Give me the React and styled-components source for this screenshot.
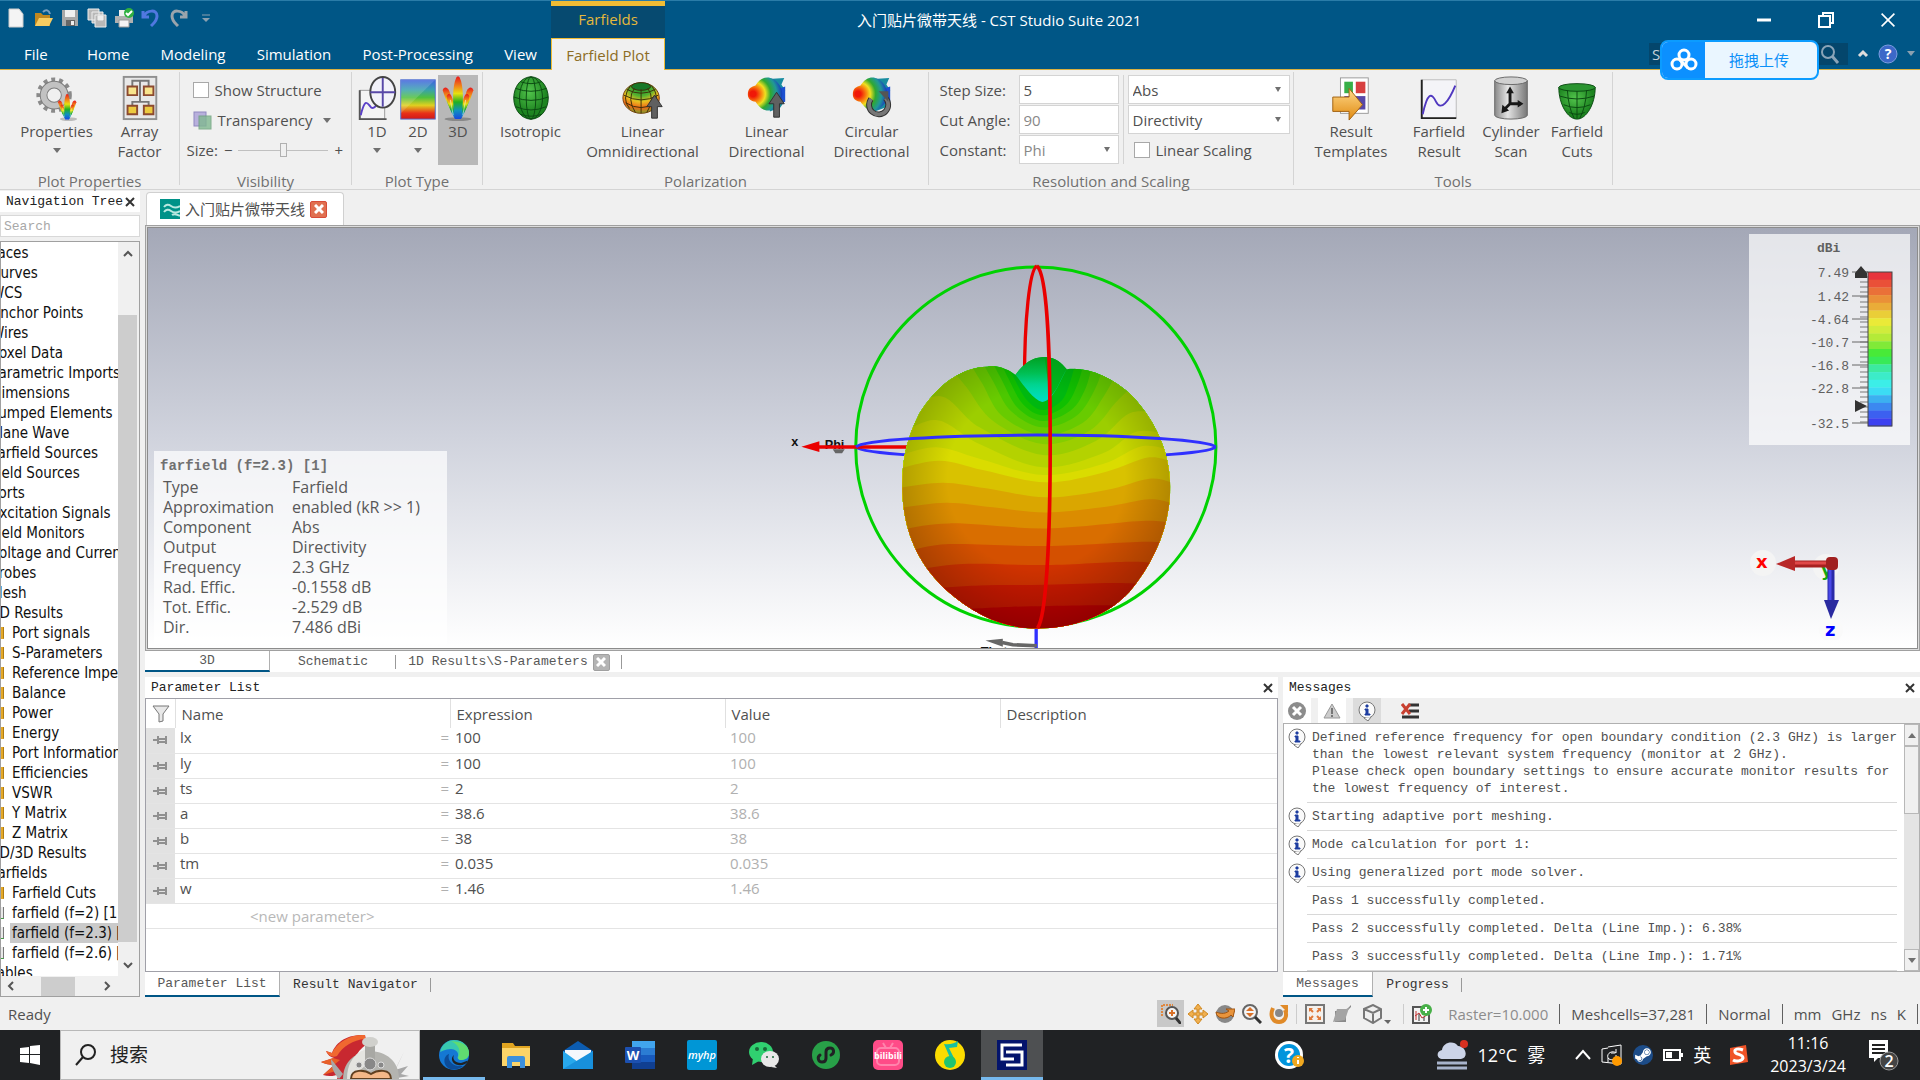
import React from "react";
import styled, { createGlobalStyle, css } from "styled-components";
import { FaSteamSymbol } from "react-icons/fa";

const ui = `"Open Sans", "Noto Sans CJK SC", sans-serif`;
const mono = `"Liberation Mono", "Noto Sans CJK SC", monospace`;
const tree = `"DejaVu Sans Condensed", "DejaVu Sans", sans-serif`;

const quickAccess = ["New", "Open", "Save", "Save All", "Print", "Undo", "Redo"];
const menu = ["File", "Home", "Modeling", "Simulation", "Post-Processing", "View"];

const treeItems = [
  ["Faces"],
  ["Curves"],
  ["WCS"],
  ["Anchor Points"],
  ["Wires"],
  ["Voxel Data"],
  ["Parametric Imports"],
  ["Dimensions"],
  ["Lumped Elements"],
  ["Plane Wave"],
  ["Farfield Sources"],
  ["Field Sources"],
  ["Ports"],
  ["Excitation Signals"],
  ["Field Monitors"],
  ["Voltage and Current Monitors"],
  ["Probes"],
  ["Mesh"],
  ["1D Results"],
  ["Port signals", "folder"],
  ["S-Parameters", "folder"],
  ["Reference Impedance", "folder"],
  ["Balance", "folder"],
  ["Power", "folder"],
  ["Energy", "folder"],
  ["Port Information", "folder"],
  ["Efficiencies", "folder"],
  ["VSWR", "folder"],
  ["Y Matrix", "folder"],
  ["Z Matrix", "folder"],
  ["2D/3D Results"],
  ["Farfields"],
  ["Farfield Cuts", "folder"],
  ["farfield (f=2) [1]", "field"],
  ["farfield (f=2.3) [1]", "field"],
  ["farfield (f=2.6) [1]", "field"],
  ["Tables"],
];

const info = [
  ["Type", "Farfield"],
  ["Approximation", "enabled (kR >> 1)"],
  ["Component", "Abs"],
  ["Output", "Directivity"],
  ["Frequency", "2.3 GHz"],
  ["Rad. Effic.", "-0.1558 dB"],
  ["Tot. Effic.", "-2.529 dB"],
  ["Dir.", "7.486 dBi"],
];

const params = [
  ["lx", "100"],
  ["ly", "100"],
  ["ts", "2"],
  ["a", "38.6"],
  ["b", "38"],
  ["tm", "0.035"],
  ["w", "1.46"],
];

const messages = [
  [
    true,
    "Defined reference frequency for open boundary condition (2.3 GHz) is larger\nthan the lowest relevant system frequency (monitor at 2 GHz).\nPlease check open boundary settings to ensure accurate monitor results for\nthe lowest frequency of interest.",
  ],
  [true, "Starting adaptive port meshing."],
  [true, "Mode calculation for port 1:"],
  [true, "Using generalized port mode solver."],
  [false, "Pass 1 successfully completed."],
  [false, "Pass 2 successfully completed. Delta (Line Imp.): 6.38%"],
  [false, "Pass 3 successfully completed. Delta (Line Imp.): 1.71%"],
];

// smooth curve through a list of points
const curve = (p) => {
  let d = `M${p[0]}`;
  for (let i = 0; i < p.length - 1; i++) {
    const a = p[i - 1] || p[i];
    const b = p[i];
    const c = p[i + 1];
    const e = p[i + 2] || c;
    d += `C${b[0] + (c[0] - a[0]) / 6},${b[1] + (c[1] - a[1]) / 6} ${c[0] - (e[0] - b[0]) / 6},${c[1] - (e[1] - b[1]) / 6} ${c}`;
  }
  return d;
};

const body =
  "M708,404C670,378 640,378 625,380C540,382 470,440 420,520C385,590 368,650 368,740C370,860 405,960 500,1050C590,1130 680,1165 770,1165C880,1165 980,1130 1050,1055C1130,960 1172,850 1172,740C1172,640 1130,545 1060,470C1000,410 920,380 862,388C845,368 830,352 795,351C760,351 735,368 708,404Z";

// each level is filled from its contour down to the bottom
const levels = [
  ["#10c000", [[680, 360], [704, 415], [742, 480], [790, 510], [846, 482], [872, 425], [890, 360]]],
  ["#2cc400", [[660, 360], [688, 418], [730, 492], [790, 526], [860, 494], [895, 430], [915, 360]]],
  ["#4cc800", [[635, 360], [668, 422], [715, 504], [790, 543], [875, 510], [920, 440], [940, 360]]],
  ["#68cb00", [[605, 360], [642, 426], [695, 514], [790, 562], [890, 528], [945, 450], [975, 370]]],
  ["#84cd00", [[565, 360], [608, 430], [668, 528], [790, 585], [910, 548], [975, 465], [1015, 390]]],
  ["#9cce00", [[490, 360], [560, 440], [640, 542], [790, 612], [930, 572], [1010, 486], [1070, 430]]],
  ["#b4d200", [[380, 500], [490, 470], [600, 562], [790, 645], [950, 602], [1050, 520], [1140, 520]]],
  ["#c8d800", [[350, 590], [470, 540], [600, 612], [790, 682], [970, 640], [1075, 574], [1190, 590]]],
  ["#dadc00", [[350, 650], [470, 622], [600, 656], [790, 705], [970, 672], [1090, 618], [1190, 636]]],
  ["#d9c200", [[350, 688], [480, 662], [610, 690], [800, 727], [980, 695], [1110, 652], [1190, 672]]],
  ["#daa600", [[350, 745], [490, 728], [620, 745], [800, 772], [980, 750], [1110, 716], [1190, 732]]],
  ["#db8c00", [[350, 805], [500, 788], [640, 802], [800, 817], [980, 800], [1110, 778], [1190, 793]]],
  ["#d96e00", [[350, 872], [510, 850], [800, 865], [1100, 842], [1190, 856]]],
  ["#d45000", [[380, 935], [510, 912], [800, 918], [1100, 905], [1190, 916]]],
  ["#cf3200", [[400, 992], [550, 972], [800, 975], [1050, 965], [1150, 972]]],
  ["#c81800", [[440, 1046], [600, 1036], [800, 1034], [1000, 1029], [1100, 1032]]],
  ["#bf0000", [[540, 1108], [700, 1100], [900, 1096], [1020, 1096]]],
];

const Svg = ({ s = 20, w, h, box, children }) => (
  <svg width={w || s} height={h || s} viewBox={box || `0 0 ${w || s} ${h || s}`} fill="none" aria-hidden="true">
    {children}
  </svg>
);

const Defs = () => (
  <DefsSvg width="0" height="0" aria-hidden="true">
    <defs>
      <linearGradient id="rainbow" x2="0" y2="1">
        <stop offset="0" stopColor="#e8181c" />
        <stop offset="0.25" stopColor="#f09018" />
        <stop offset="0.4" stopColor="#e8e010" />
        <stop offset="0.6" stopColor="#20b020" />
        <stop offset="0.8" stopColor="#1090c0" />
        <stop offset="1" stopColor="#1848e0" />
      </linearGradient>
      <linearGradient id="rainbowDown" x2="0" y2="1">
        <stop offset="0" stopColor="#4060e0" />
        <stop offset="0.25" stopColor="#38a0b0" />
        <stop offset="0.45" stopColor="#50c040" />
        <stop offset="0.65" stopColor="#e0d020" />
        <stop offset="0.85" stopColor="#e83018" />
        <stop offset="1" stopColor="#d01818" />
      </linearGradient>
      <linearGradient id="metal" x2="1">
        <stop offset="0" stopColor="#888" />
        <stop offset="0.4" stopColor="#e4e4e4" />
        <stop offset="1" stopColor="#777" />
      </linearGradient>
      <linearGradient id="gold" x2="0" y2="1">
        <stop offset="0" stopColor="#ffd98a" />
        <stop offset="1" stopColor="#e08a10" />
      </linearGradient>
      <radialGradient id="green" cx="0.45" cy="0.35">
        <stop offset="0" stopColor="#52c44c" />
        <stop offset="1" stopColor="#1d8420" />
      </radialGradient>
      <radialGradient id="torus" cx="0.5" cy="0.1" r="0.95">
        <stop offset="0" stopColor="#108028" />
        <stop offset="0.35" stopColor="#50b030" />
        <stop offset="0.55" stopColor="#e8c020" />
        <stop offset="0.75" stopColor="#f06818" />
        <stop offset="1" stopColor="#60b030" />
      </radialGradient>
      <radialGradient id="beam" cx="0.15" cy="0.5" r="0.85">
        <stop offset="0.1" stopColor="#f01808" />
        <stop offset="0.3" stopColor="#f89010" />
        <stop offset="0.42" stopColor="#f0e020" />
        <stop offset="0.6" stopColor="#30a830" />
        <stop offset="0.8" stopColor="#209898" />
        <stop offset="1" stopColor="#1838c0" />
      </radialGradient>
    </defs>
  </DefsSvg>
);

const lobes = (
  <g fill="url(#rainbow)">
    <path d="M13 44C8 34 3 24 0 14C1 10 5 10 7 15L14 38Z" />
    <path d="M19 44C24 34 29 24 32 14C31 10 27 10 25 15L18 38Z" />
    <path d="M13 44C8 36 5 28 4 20C6 16 9 18 10 22L16 40Z" />
    <path d="M19 44C24 36 27 28 28 20C26 16 23 18 22 22L16 40Z" />
    <path d="M13 44C10 28 10 10 14 1C15 -1 17 -1 18 1C22 10 22 28 19 44Z" />
    <path d="M11 40L8 24M21 40L24 24" stroke="#fff8" />
  </g>
);

const globeLines = (
  <g stroke="#0a4a12" strokeWidth="1">
    <ellipse cx="20" cy="20" rx="19" ry="19" />
    <ellipse cx="20" cy="20" rx="13" ry="19" />
    <ellipse cx="20" cy="20" rx="5" ry="19" />
    <path d="M3 12Q20 17 37 12M1 20Q20 26 39 20M3 28Q20 34 37 28M8 6Q20 10 32 6M8 35Q20 39 32 35" />
  </g>
);

const upArrow = <path d="M33 21L41 33H36V45H30V33H25Z" fill="#606060" stroke="#303030" />;

const beam = (
  <g>
    <path d="M27 4L39 3L36 10L40 16L37 22L40 26L35 34L24 38Z" fill="#188ca0" />
    <path d="M34 14L40 12V28L33 30Z" fill="#1c50d0" />
    <path d="M1 20C1 14 5 12 9 11C14 2 22 1 27 4C34 8 37 15 37 20C37 27 32 35 24 37C16 38 12 32 9 28C4 27 1 25 1 20Z" fill="url(#beam)" />
  </g>
);

const bigIcons = {
  properties: (
    <Svg w={44} h={48}>
      <circle cx="19" cy="21" r="16" stroke="#8a8a8a" strokeWidth="5" strokeDasharray="4 4" />
      <circle cx="19" cy="21" r="11" stroke="#7c7c7c" strokeWidth="8" />
      <circle cx="19" cy="21" r="11" stroke="#c2c2c2" strokeWidth="6" />
      <ellipse cx="34" cy="46" rx="9" ry="2" fill="#bbb" />
      <g transform="translate(23 20) scale(0.6)">{lobes}</g>
    </Svg>
  ),
  array: (
    <Svg w={36} h={48}>
      <rect x="1" y="2" width="34" height="44" fill="#e8e8e8" stroke="#909090" strokeWidth="2" />
      <path d="M10 14V6H27V14M18 6V28M10 36V28H27V36" stroke="#777" strokeWidth="2" />
      <g stroke="#8c4a30" strokeWidth="2">
        <path d="M5 12H15V21H5ZM22 12H32V21H22Z" fill="#f8e48c" />
        <path d="M5 32H15V41H5ZM22 32H32V41H22Z" fill="#ecca40" />
      </g>
    </Svg>
  ),
  d1: (
    <Svg w={40} h={48}>
      <path d="M2 16H28V46H2Z" fill="#f4f4f4" stroke="#999" />
      <path d="M2 16V46H30" stroke="#555" strokeWidth="2" />
      <path d="M3 42C8 22 10 30 14 34C18 36 20 30 24 24" stroke="#5a40c8" strokeWidth="2" />
      <ellipse cx="26" cy="18" rx="13" ry="16" fill="#f2f2fa" stroke="#444" strokeWidth="2" />
      <path d="M13 18H39M26 3V33" stroke="#5848a8" strokeWidth="2" />
    </Svg>
  ),
  d2: (
    <Svg w={38} h={48}>
      <rect x="1" y="5" width="36" height="41" fill="url(#rainbowDown)" stroke="#5070d0" />
      <path d="M1 5H37L1 40Z" fill="#fff" opacity="0.15" />
    </Svg>
  ),
  d3: (
    <Svg w={34} h={48} box="0 -2 32 48">
      <ellipse cx="16" cy="44" rx="14" ry="2" fill="#888" />
      {lobes}
    </Svg>
  ),
  isotropic: (
    <Svg w={38} h={48}>
      <ellipse cx="19" cy="24" rx="18" ry="22" fill="url(#green)" stroke="#0a4a12" />
      <g stroke="#0a4a12">
        <ellipse cx="19" cy="24" rx="12" ry="22" />
        <ellipse cx="19" cy="24" rx="5" ry="22" />
        <path d="M3 14Q19 20 35 14M1 23Q19 30 37 23M3 33Q19 40 35 33M8 7Q19 11 30 7M8 41Q19 45 30 41" />
      </g>
    </Svg>
  ),
  omni: (
    <Svg w={42} h={48}>
      <ellipse cx="19" cy="24" rx="19" ry="16" fill="url(#torus)" stroke="#7a4010" />
      <g stroke="#3c3008" strokeWidth="1">
        <ellipse cx="19" cy="12" rx="10" ry="4" fill="#187828" />
        <path d="M1 21Q19 31 37 21M3 29Q19 39 35 29M4 15Q19 23 34 15M12 14Q4 25 13 39M26 14Q34 25 25 39M19 15V40M8 11Q-2 25 7 35M30 11Q40 25 31 35" />
      </g>
      {upArrow}
    </Svg>
  ),
  linear: (
    <Svg w={42} h={48}>
      {beam}
      <path d="M31 18L39 30H34V44H28V30H23Z" fill="#606060" stroke="#303030" />
    </Svg>
  ),
  circular: (
    <Svg w={42} h={48}>
      {beam}
      <path d="M20 25A10 10 0 1 0 35 24" stroke="#303030" strokeWidth="6" />
      <path d="M20 25A10 10 0 1 0 35 24" stroke="#777" strokeWidth="4" />
      <path d="M28 17H38V28Z" fill="#555" />
    </Svg>
  ),
  templates: (
    <Svg w={40} h={48}>
      <rect x="9" y="3" width="29" height="37" fill="#fff" stroke="#999" />
      <path d="M13 7H22V19H13Z" fill="#38b048" />
      <path d="M25 7H35V19H25Z" fill="#d84040" />
      <path d="M13 22H35V36H13Z" fill="#5848a8" />
      <path d="M1 23H18V14L32 31L18 47V38H1Z" fill="url(#gold)" stroke="#a06010" />
    </Svg>
  ),
  result: (
    <Svg w={40} h={48}>
      <path d="M2 5H38V45H2Z" fill="#f4f4f8" stroke="#bbb" />
      <path d="M2 5V45H38" stroke="#222" strokeWidth="2" />
      <path d="M3 41C8 18 12 18 17 28C22 38 30 28 37 11" stroke="#5038c0" strokeWidth="2" />
    </Svg>
  ),
  cylinder: (
    <Svg w={38} h={48}>
      <path d="M2 6V42A17 4 0 0 0 36 42V6Z" fill="url(#metal)" stroke="#666" />
      <ellipse cx="19" cy="6" rx="17" ry="4" fill="#d0d0d0" stroke="#666" />
      <path d="M18 16V30L11 37M18 30H29" stroke="#181818" strokeWidth="3" />
      <path d="M18 12L22 19H14ZM9 40L10 31L17 37ZM32 30L26 26V34Z" fill="#181818" />
    </Svg>
  ),
  cuts: (
    <Svg w={40} h={48}>
      <path d="M1 13C1 30 10 46 20 46S39 30 39 13Z" fill="url(#green)" stroke="#0a4a12" />
      <ellipse cx="20" cy="13" rx="19" ry="4" fill="#2a9430" stroke="#0a4a12" />
      <path d="M2 22Q20 28 38 22M6 31Q20 37 34 31M12 39Q20 43 28 39M10 16Q11 34 17 45M20 17V45M30 16Q29 34 23 45" stroke="#0a4a12" />
    </Svg>
  ),
};

const quickIcons = {
  New: <path d="M3 1H13L17 6V19H3Z" fill="#f4f4f4" stroke="#ccc" />,
  Open: (
    <>
      <path d="M2 5H8L10 7H17V18H2Z" fill="#c08820" />
      <path d="M2 18L6 10H20L16 18Z" fill="#f8cc60" />
      <path d="M10 4C13 1 16 2 17 6" stroke="#7aa0c0" strokeWidth="2" />
    </>
  ),
  Save: (
    <>
      <path d="M2 2H18V18H2Z" fill="#a8a8a8" />
      <path d="M5 2H15V9H5Z" fill="#f0f0f0" />
      <path d="M6 12H15V18H6Z" fill="#666" />
      <path d="M11 13H14V17H11Z" fill="#eee" />
    </>
  ),
  "Save All": (
    <g fill="#b8b8b8" stroke="#eee">
      <path d="M1 1H12V12H1ZM5 4H16V15H5Z" />
      <path d="M8 7H19V19H8Z" />
      <path d="M11 8H16V12H11Z" fill="#eee" />
    </g>
  ),
  Print: (
    <>
      <path d="M5 2H15V8H5Z" fill="#eee" />
      <path d="M1 8H19V15H1Z" fill="#b0b0b0" />
      <path d="M5 12H15V19H5Z" fill="#f4f4f4" stroke="#999" />
      <circle cx="15" cy="5" r="5" fill="#30b040" />
      <path d="M12 5L14 7L18 3" stroke="#fff" strokeWidth="2" />
    </>
  ),
  Undo: <path d="M2 3V9H8M3 8C6 2 16 1 16 8C16 13 13 15 10 18" stroke="#5078e0" strokeWidth="3" />,
  Redo: <path d="M18 3V9H12M17 8C14 2 4 1 4 8C4 13 7 15 10 18" stroke="#9aa4ac" strokeWidth="3" />,
};

const statusIcons = [
  <>
    <path d="M1 12V1H12" stroke="#e08840" strokeWidth="2" strokeDasharray="2 1" />
    <circle cx="11" cy="9" r="6" fill="#f4f4f4" stroke="#555" strokeWidth="2" />
    <path d="M15 14L20 20" stroke="#333" strokeWidth="3" />
    <path d="M8 9H14M11 6V12" stroke="#d87028" strokeWidth="2" />
  </>,
  <path d="M10 0L14 5H11V9H15V6L20 10L15 14V11H11V15H14L10 20L6 15H9V11H5V14L0 10L5 6V9H9V5H6Z" fill="#f0b050" stroke="#d08820" />,
  <>
    <circle cx="10" cy="10" r="9" fill="#888" />
    <path d="M1 8C1 15 12 16 16 11L18 13L20 5H11L14 7C9 11 4 9 1 8Z" fill="#e8943c" stroke="#a05410" />
  </>,
  <>
    <circle cx="8" cy="8" r="7" fill="#f4f4f4" stroke="#666" strokeWidth="2" />
    <path d="M13 13L19 19" stroke="#333" strokeWidth="3" />
    <path d="M8 3L12 7H4ZM8 13L12 9H4Z" fill="#d87028" />
  </>,
  <>
    <circle cx="10" cy="9" r="4" fill="#888" />
    <path d="M4 4C0 13 5 18 10 18S19 13 16 6" stroke="#e08a28" strokeWidth="4" />
    <path d="M11 1H19V9Z" fill="#e08a28" />
  </>,
  null,
  <>
    <rect x="1" y="1" width="18" height="18" fill="#f4f0ec" stroke="#777" strokeWidth="2" />
    <g stroke="#e07838" strokeWidth="2">
      <path d="M5 5L8 8M15 5L12 8M15 15L12 12M5 15L8 12" />
    </g>
    <path d="M4 4H8L4 8ZM16 4V8L12 4ZM16 16H12L16 12ZM4 16V12L8 16Z" fill="#e07838" />
  </>,
  <>
    <path d="M3 7H13L19 1V3L14 8V18H3Z" fill="#8a8a8a" />
    <path d="M1 18L5 5H14L17 4L13 16Z" fill="#a4a4a4" />
  </>,
];

const Info = () => (
  <Svg w={18} h={20}>
    <circle cx="9" cy="9" r="8" fill="#fafafa" stroke="#777" />
    <path d="M6 17L10 20L13 16" fill="#fafafa" stroke="#777" />
    <path d="M8 4H10V6H8ZM7 8H10V13H12V14H7V13H8V9H7Z" fill="#1c3ca0" stroke="#1c3ca0" />
  </Svg>
);

const Chevron = ({ up, side, color = "#555", w = 2 }) => (
  <Svg s={12}>
    <path
      d={side === "left" ? "M8 2L4 6L8 10" : side === "right" ? "M4 2L8 6L4 10" : up ? "M2 8L6 4L10 8" : "M2 4L6 8L10 4"}
      stroke={color}
      strokeWidth={w}
    />
  </Svg>
);

const Cross = ({ color = "#333", s = 10, w = 2 }) => (
  <Svg s={s} box="0 0 10 10">
    <path d="M1 1L9 9M9 1L1 9" stroke={color} strokeWidth={w} />
  </Svg>
);

const Big = ({ icon, w, drop, on, children }) => (
  <BigButton $w={w} $on={on}>
    {bigIcons[icon]}
    <span>{children}</span>
    {drop && <Caret />}
  </BigButton>
);

const Group = ({ w, name, children }) => (
  <GroupBox $w={w}>
    <GroupBody>{children}</GroupBody>
    <GroupName>{name}</GroupName>
  </GroupBox>
);

const Farfield = () => (
  <Scene viewBox="148 229 1768 420" preserveAspectRatio="xMidYMid slice" fill="none" aria-label="3D farfield">
    <defs>
      <clipPath id="body">
        <path d={body} />
      </clipPath>
      <radialGradient id="shade" cx="0.5" cy="0.45" r="0.6">
        <stop offset="0.55" stopColor="#000" stopOpacity="0" />
        <stop offset="1" stopColor="#000" stopOpacity="0.28" />
      </radialGradient>
      <linearGradient id="stem" x2="0" y2="1">
        <stop offset="0" stopColor="#00b828" />
        <stop offset="0.35" stopColor="#00cc58" />
        <stop offset="0.6" stopColor="#00d890" />
        <stop offset="1" stopColor="#00dcc8" />
      </linearGradient>
    </defs>
    <g transform="translate(779 241) scale(0.333333)">
      <circle cx="769" cy="621" r="540" stroke="#00d200" strokeWidth="9" />
      <path d="M230 621A540 37 0 0 0 1308 621" stroke="#3030ff" strokeWidth="9" />
      <path d="M772 78C750 90 735 240 735 420" stroke="#ea0000" strokeWidth="10" />
      <path d="M770 1160V1240" stroke="#3030ff" strokeWidth="10" />
      <text x="136" y="628" fontSize="38" fontWeight="700" fill="#111" fontFamily="Liberation Sans">Phi</text>
      <path d="M160 628H196L188 640H168Z" fill="#666" />
      <path d="M100 621H400" stroke="#ea0000" strokeWidth="11" />
      <path d="M66 620L120 604V636Z" fill="#ea0000" />
      <text x="36" y="618" fontSize="38" fontWeight="700" fill="#111" fontFamily="Liberation Sans">x</text>
      <g clipPath="url(#body)">
        <rect x="340" y="340" width="860" height="840" fill="#00b810" />
        {levels.map(([fill, pts]) => (
          <path key={fill} d={`${curve(pts)}L1300,${pts[pts.length - 1][1]}V1300H200V${pts[0][1]}Z`} fill={fill} />
        ))}
        <path d="M708,404C735,368 760,351 795,351C830,352 845,368 862,388C842,420 822,484 788,486C762,480 735,440 708,404Z" fill="url(#stem)" />
        <path d="M795,351C830,352 845,368 862,388C845,410 836,450 812,470Z" fill="#00b81c" />
        <path d={body} fill="url(#shade)" />
      </g>
      <path d="M230 621A540 38 0 0 1 1308 621" stroke="#3030ff" strokeWidth="9" />
      <path d="M772 78C812 110 812 480 812 620C812 900 800 1130 774 1164" stroke="#ea0000" strokeWidth="11" />
      <path d="M772 1217L700 1214L668 1207" stroke="#666" strokeWidth="11" />
      <path d="M618 1201L670 1196V1220Z" fill="#666" />
      <text x="604" y="1248" fontSize="38" fontWeight="700" fill="#111" fontFamily="Liberation Sans">Theta</text>
    </g>
  </Scene>
);

const scaleColors = [
  "#e8343c", "#ea5038", "#ea7038", "#ea9038", "#eaac38", "#eace38", "#eaea38", "#d0ec3c", "#b4ea38", "#80ea38", "#48ea38",
  "#38ea58", "#3ceaa0", "#3cecc8", "#3ceee8", "#3cdcf4", "#3cb0f0", "#3c88f0", "#3c60f0", "#3c40f0",
];

const scaleLabels = [
  ["7.49", 38], ["1.42", 62], ["-4.64", 85], ["-10.7", 108], ["-16.8", 131], ["-22.8", 154], ["-32.5", 189],
];

const Legend = () => (
  <LegendBox>
    <svg width="161" height="211" aria-label="dBi scale">
      <LegendText x="68" y="18" $bold>dBi</LegendText>
      {scaleLabels.map(([t, y]) => (
        <g key={t}>
          <LegendText x="100" y={y + 5} $end>{t}</LegendText>
          <path d={`M103 ${y}H119`} stroke="#666" strokeWidth="1" />
        </g>
      ))}
      {Array.from({ length: 31 }, (_, i) => (
        <path key={i} d={`M111 ${38 + i * 5}H119`} stroke="#777" />
      ))}
      {scaleColors.map((c, i) => (
        <rect key={c} x="119" y={38 + i * 7.7} width="24" height="8" fill={c} />
      ))}
      <rect x="119" y="38" width="24" height="154" fill="none" stroke="#444" />
      <path d="M112 32L118 39V44H106V39ZM106 166L118 172L106 178Z" fill="#333" />
    </svg>
  </LegendBox>
);

const Triad = () => (
  <TriadBox width="96" height="90" viewBox="0 0 96 90">
    <circle cx="13" cy="13" r="13" fill="#f4f4f4" />
    <circle cx="76" cy="17" r="13" fill="#f4f4f4" />
    <circle cx="81" cy="80" r="12" fill="#fafafa" />
    <text x="6" y="18" fontFamily="DejaVu Sans" fontWeight="700" fontSize="18" fill="#f00">x</text>
    <text x="71" y="26" fontFamily="DejaVu Sans" fontWeight="700" fontSize="18" fill="#10a810">y</text>
    <text x="75" y="86" fontFamily="DejaVu Sans" fontWeight="700" fontSize="18" fill="#00f">z</text>
    <path d="M81 13V55" stroke="#2a2aa8" strokeWidth="7" />
    <path d="M80 13V55" stroke="#4848e8" strokeWidth="3" />
    <path d="M74 50H89L81 69Z" fill="#2a2aa0" />
    <path d="M81 14H40" stroke="#a82020" strokeWidth="7" />
    <path d="M81 13H40" stroke="#e04848" strokeWidth="3" />
    <path d="M26 14L45 6V21Z" fill="#b82828" />
    <rect x="76" y="7" width="12" height="13" rx="4" fill="#a02020" />
  </TriadBox>
);

const taskIcons = [
  ["Edge", (
    <>
      <circle cx="15" cy="15" r="15" fill="#1478d4" />
      <path d="M1 12C3 3 10 0 15 0C24 0 30 6 30 13C30 18 26 20 22 20C19 20 18 18 19 16C20 12 16 9 12 9C6 9 2 12 1 12Z" fill="#38c8b0" />
      <path d="M18 2C26 3 30 8 30 13C30 18 26 20 22 20C20 20 18 18 20 16C22 8 18 4 12 1Z" fill="#60dc70" />
      <path d="M10 14C8 20 13 27 24 26C20 30 12 31 8 27C3 22 6 15 10 14Z" fill="#0c4c98" />
      <path d="M15 15C13 19 16 23 22 23C26 22 29 20 29 21C27 25 22 26 19 25C13 24 11 18 15 15Z" fill="#202224" />
    </>
  )],
  ["File Explorer", (
    <>
      <path d="M1 3H12L14 6H29V25H1Z" fill="#e0a420" />
      <path d="M1 8H29V26H1Z" fill="#fcd468" />
      <path d="M6 28V18Q6 16 8 16H22Q24 16 24 18V28H19V22H11V28Z" fill="#3c90dc" />
    </>
  )],
  ["Mail", (
    <>
      <path d="M0 11L15 1L30 11V16H0Z" fill="#0c5cb0" />
      <path d="M2 10H28V22H2Z" fill="#f4f8fc" />
      <path d="M0 11L15 22L30 11V29H0Z" fill="#28a8ec" />
      <path d="M0 29L30 11V29Z" fill="#1890dc" />
    </>
  )],
  ["Word", (
    <>
      <path d="M7 1H30V8H7Z" fill="#41a5ee" />
      <path d="M7 8H30V15H7Z" fill="#2b7cd3" />
      <path d="M7 15H30V22H7Z" fill="#185abd" />
      <path d="M7 22H30V29H7Z" fill="#103f91" />
      <rect x="0" y="7" width="16" height="16" rx="1" fill="#1c50b0" />
      <text x="8" y="20" textAnchor="middle" fontSize="13" fontWeight="700" fill="#fff" fontFamily="Open Sans">W</text>
    </>
  )],
  ["myHP", (
    <>
      <rect width="30" height="30" rx="2" fill="#0096d6" />
      <text x="15" y="19" textAnchor="middle" fontSize="11" fontStyle="italic" fontWeight="600" fill="#fff" fontFamily="Open Sans">myhp</text>
    </>
  )],
  ["WeChat", (
    <>
      <ellipse cx="12" cy="12" rx="12" ry="10" fill="#30d070" />
      <path d="M4 18L3 25L10 21Z" fill="#30d070" />
      <ellipse cx="21" cy="19" rx="9" ry="8" fill="#e8e8e8" />
      <path d="M25 25L28 28L22 27Z" fill="#e8e8e8" />
      <g fill="#186838">
        <circle cx="8" cy="9" r="2" />
        <circle cx="16" cy="9" r="2" />
        <circle cx="18" cy="17" r="1" />
        <circle cx="24" cy="17" r="1" />
      </g>
    </>
  )],
  ["Mini Programs", (
    <>
      <circle cx="15" cy="15" r="14" fill="#28a048" />
      <path d="M9 15C6 17 7 22 11 22C14 22 15 20 15 18V12C15 9 17 8 19 8C23 8 24 13 20 15" stroke="#202224" strokeWidth="3" strokeLinecap="round" />
    </>
  )],
  ["bilibili", (
    <>
      <rect width="30" height="30" rx="5" fill="#ff4c88" />
      <rect x="4" y="8" width="22" height="17" rx="4" stroke="#ff84ac" strokeWidth="2" />
      <path d="M10 3L13 8M20 3L17 8" stroke="#ff84ac" strokeWidth="2" />
      <text x="15" y="19" textAnchor="middle" fontSize="9" fontWeight="700" fill="#fff" fontFamily="Open Sans">bilibili</text>
    </>
  )],
  ["QQ Music", (
    <>
      <circle cx="15" cy="15" r="15" fill="#fcdc00" />
      <path d="M9 4C15 5 20 3 23 1L22 7L14 8L20 20L16 20Z" fill="#18c0a0" />
      <circle cx="15" cy="22" r="6" fill="#20c470" />
    </>
  )],
  ["CST", (
    <>
      <rect width="30" height="30" fill="#04146c" />
      <path d="M25 5H5V19H17M9 12H25V25H9" stroke="#fff" strokeWidth="3" />
    </>
  )],
];

const App = () => {
  return (
    <Window>
      <GlobalStyle />
      <Defs />
      <TitleBar>
        <Quick>
          {quickAccess.map((q) => (
            <IconButton key={q} aria-label={q}>
              <Svg>{quickIcons[q]}</Svg>
            </IconButton>
          ))}
          <Svg s={10}>
            <path d="M1 2H9" stroke="#8aa0b0" />
            <path d="M1 5H9L5 9Z" fill="#8aa0b0" />
          </Svg>
        </Quick>
        <Context>Farfields</Context>
        <TitleRow>
          <Title>入门贴片微带天线 - CST Studio Suite 2021</Title>
          <WindowButtons>
            <IconButton aria-label="Minimize">
              <Svg s={16}><path d="M1 8H15" stroke="#fff" strokeWidth="3" /></Svg>
            </IconButton>
            <IconButton aria-label="Restore">
              <Svg s={16}><path d="M5 4V1H15V11H12M1 4H12V15H1Z" stroke="#fff" strokeWidth="2" /></Svg>
            </IconButton>
            <IconButton aria-label="Close"><Cross color="#fff" s={16} w={1} /></IconButton>
          </WindowButtons>
        </TitleRow>
        <Menu>
          {menu.map((m) => <MenuTab key={m}>{m}</MenuTab>)}
        </Menu>
        <ActiveTab>Farfield Plot</ActiveTab>
        <MenuEnd>
          <HelpSearch>
            <input aria-label="Search help" placeholder="Search" />
            <Svg s={20}>
              <circle cx="8" cy="8" r="6" stroke="#8aa4b8" strokeWidth="2" />
              <path d="M12 12L18 19" stroke="#8aa4b8" strokeWidth="3" />
            </Svg>
          </HelpSearch>
          <IconButton aria-label="Collapse ribbon"><Chevron up color="#ddd" w={3} /></IconButton>
          <IconButton aria-label="Help">
            <Svg s={20}>
              <circle cx="10" cy="10" r="9" fill="#3c68c8" stroke="#7c9ce0" />
              <text x="10" y="15" textAnchor="middle" fontSize="14" fontWeight="700" fill="#fff">?</text>
            </Svg>
          </IconButton>
          <Caret $light />
        </MenuEnd>
      </TitleBar>
      <Upload>
        <span>
          <Svg w={28} h={24}>
            <g stroke="#fff" strokeWidth="3">
              <circle cx="14" cy="7" r="5" />
              <circle cx="7" cy="16" r="5" />
              <circle cx="21" cy="16" r="5" />
              <path d="M10 12L18 20" />
            </g>
          </Svg>
        </span>
        拖拽上传
      </Upload>

      <Ribbon>
        <Group w={180} name="Plot Properties">
          <Big icon="properties" w={100} drop>Properties</Big>
          <Big icon="array" w={66}>Array Factor</Big>
        </Group>
        <Group w={172} name="Visibility">
          <Stack>
            <Option><input type="checkbox" /> Show Structure</Option>
            <Option as="button">
              <Svg s={19}>
                <rect x="1" y="1" width="12" height="14" fill="#b8b0dc" stroke="#9088c0" />
                <rect x="6" y="5" width="12" height="13" fill="#80b890" stroke="#68a078" opacity="0.8" />
              </Svg>
              Transparency <Caret />
            </Option>
            <SizeRow>
              Size: <i>−</i>
              <input type="range" aria-label="Size" />
              <i>+</i>
            </SizeRow>
          </Stack>
        </Group>
        <Group w={131} name="Plot Type">
          <Big icon="d1" w={42} drop>1D</Big>
          <Big icon="d2" w={40} drop>2D</Big>
          <Big icon="d3" w={40} on>3D</Big>
        </Group>
        <Group w={446} name="Polarization">
          <Big icon="isotropic" w={84}>Isotropic</Big>
          <Big icon="omni" w={140}>Linear Omnidirectional</Big>
          <Big icon="linear" w={108}>Linear Directional</Big>
          <Big icon="circular" w={102}>Circular Directional</Big>
        </Group>
        <Group w={365} name="Resolution and Scaling">
          <Fields>
            <label htmlFor="step">Step Size:</label>
            <Field id="step" defaultValue="5" />
            <label htmlFor="angle">Cut Angle:</label>
            <Field id="angle" defaultValue="90" disabled />
            <label htmlFor="constant">Constant:</label>
            <Drop>
              <select id="constant" disabled><option>Phi</option></select>
            </Drop>
          </Fields>
          <Choices>
            <Drop>
              <select aria-label="Component"><option>Abs</option></select>
            </Drop>
            <Drop>
              <select aria-label="Quantity"><option>Directivity</option></select>
            </Drop>
            <Option><input type="checkbox" /> Linear Scaling</Option>
          </Choices>
        </Group>
        <Group w={319} name="Tools">
          <Big icon="templates" w={104}>Result Templates</Big>
          <Big icon="result" w={72}>Farfield Result</Big>
          <Big icon="cylinder" w={72}>Cylinder Scan</Big>
          <Big icon="cuts" w={60}>Farfield Cuts</Big>
        </Group>
      </Ribbon>

      <Workspace>
        <Nav>
          <PanelHead>
            Navigation Tree
            <IconButton aria-label="Close navigation tree"><Cross /></IconButton>
          </PanelHead>
          <TreeSearch aria-label="Search tree" placeholder="Search" />
          <TreeBox>
            <TreeView>
              <ul>
                {treeItems.map(([name, kind]) => (
                  <TreeRow key={name} $kind={kind}>
                    {kind && <b />}
                    <TreeName $on={name.includes("2.3")}>{name}</TreeName>
                  </TreeRow>
                ))}
              </ul>
            </TreeView>
            <TreeScroll><Chevron up /><div /><Chevron /></TreeScroll>
            <TreeScrollX><Chevron side="left" /><div /><Chevron side="right" /></TreeScrollX>
          </TreeBox>
        </Nav>

        <Main>
          <DocTab>
            <Svg s={20}>
              <rect width="20" height="20" fill="#009288" />
              <path d="M4 8Q7 4 11 7T20 7M4 13Q7 9 11 12T20 12M12 16Q15 14 20 17" stroke="#b8e8e0" strokeWidth="2" />
            </Svg>
            入门贴片微带天线
            <TabClose aria-label="Close document"><Cross color="#fff" w={3} /></TabClose>
          </DocTab>
          <ViewFrame>
            <View>
              <Farfield />
              <InfoBox>
                <strong>farfield (f=2.3) [1]</strong>
                <dl>
                  {info.map(([k, v]) => (
                    <React.Fragment key={k}>
                      <dt>{k}</dt>
                      <dd>{v}</dd>
                    </React.Fragment>
                  ))}
                </dl>
              </InfoBox>
              <Legend />
              <Triad />
            </View>
          </ViewFrame>
          <ViewTabs>
            <Tab $on $w={125}>3D</Tab>
            <Tab $w={126}>Schematic</Tab>
            <Tab $w={226}>
              1D Results\S-Parameters
              <TabClose as="span" $gray><Cross color="#fff" w={3} /></TabClose>
            </Tab>
          </ViewTabs>
          <Lower>
            <Panel>
              <PanelHead>
                Parameter List
                <IconButton aria-label="Close parameter list"><Cross /></IconButton>
              </PanelHead>
              <TableBox>
                <Table>
                  <thead>
                    <tr>
                      <th>
                        <Svg w={18} h={18}>
                          <path d="M1 1H17L11 9V16L7 17V9Z" fill="#e8e8e8" stroke="#777" />
                        </Svg>
                      </th>
                      <th>Name</th>
                      <th>Expression</th>
                      <th>Value</th>
                      <th>Description</th>
                    </tr>
                  </thead>
                  <tbody>
                    {params.map(([n, v]) => (
                      <tr key={n}>
                        <td>
                          <Svg w={16} h={10}>
                            <path d="M1 5H6M6 1V9M6 4H14M6 7H14M14 1V9" stroke="#909090" strokeWidth="2" />
                          </Svg>
                        </td>
                        <td>{n}<em>=</em></td>
                        <td>{v}</td>
                        <td>{v}</td>
                        <td />
                      </tr>
                    ))}
                    <tr>
                      <NewParam colSpan="5">&lt;new parameter&gt;</NewParam>
                    </tr>
                  </tbody>
                </Table>
              </TableBox>
              <PanelTabs>
                <Tab $on $w={135}>Parameter List</Tab>
                <Tab $w={151} $dark>Result Navigator</Tab>
              </PanelTabs>
            </Panel>
            <Panel $messages>
              <PanelHead>
                Messages
                <IconButton aria-label="Close messages"><Cross /></IconButton>
              </PanelHead>
              <MessageTools>
                <ToolButton aria-label="Errors">
                  <Svg s={18}>
                    <circle cx="9" cy="9" r="9" fill="#8c8c8c" />
                    <path d="M5 5L13 13M13 5L5 13" stroke="#fff" strokeWidth="3" />
                  </Svg>
                </ToolButton>
                <ToolButton aria-label="Warnings">
                  <Svg s={18}>
                    <path d="M9 2L17 16H1Z" fill="#ccc" stroke="#999" />
                    <path d="M9 6V12M9 13V15" stroke="#777" strokeWidth="2" />
                  </Svg>
                </ToolButton>
                <ToolButton aria-label="Infos" $on><Info /></ToolButton>
                <ToolButton aria-label="Clear" $plain>
                  <Svg s={18}>
                    <path d="M8 3H18M8 9H18M1 15H18" stroke="#333" strokeWidth="3" />
                    <path d="M1 2L9 12M9 2L1 12" stroke="#c84030" strokeWidth="3" />
                  </Svg>
                </ToolButton>
              </MessageTools>
              <MessageBox>
                <ul>
                  {messages.map(([icon, text]) => (
                    <Message key={text}>
                      <span>{icon && <Info />}</span>
                      <p>{text}</p>
                    </Message>
                  ))}
                </ul>
                <MessageScroll>
                  <button aria-label="Scroll up"><Caret $up /></button>
                  <div />
                  <button aria-label="Scroll down"><Caret /></button>
                </MessageScroll>
              </MessageBox>
              <PanelTabs>
                <Tab $on $w={90}>Messages</Tab>
                <Tab $w={89} $dark>Progress</Tab>
              </PanelTabs>
            </Panel>
          </Lower>
        </Main>
      </Workspace>

      <StatusBar>
        Ready
        <StatusTools>
          {statusIcons.map((icon, i) =>
            icon ? <StatusButton key={i} $on={i === 0}><Svg>{icon}</Svg></StatusButton> : <hr key={i} />
          )}
          <StatusButton $wide>
            <Svg w={30} h={20}>
              <path d="M2 5L11 1L19 5V14L11 19L2 14ZM2 5L11 9L19 5M11 9V19" stroke="#777" strokeWidth="2" />
              <path d="M22 16H29L26 20Z" fill="#666" />
            </Svg>
          </StatusButton>
          <hr />
          <StatusButton>
            <Svg>
              <rect x="1" y="3" width="16" height="16" fill="#f4f4f4" stroke="#555" strokeWidth="2" />
              <path d="M4 16V7M3 12L7 9L10 14L15 11" stroke="#c03030" />
              <path d="M7 17V10M12 17V13" stroke="#333" />
              <circle cx="14" cy="6" r="6" fill="#48b048" />
              <path d="M11 6H17M14 3V9" stroke="#fff" strokeWidth="2" />
            </Svg>
          </StatusButton>
        </StatusTools>
        <Readout $dim>Raster=10.000</Readout>
        <Readout>Meshcells=37,281</Readout>
        <Readout>Normal</Readout>
        <Readout>
          <span>mm</span><span>GHz</span><span>ns</span><span>K</span>
        </Readout>
      </StatusBar>

      <TaskBar>
        <StartButton aria-label="Start">
          <Svg s={20}>
            <path d="M0 3L9 2V9H0ZM10 1L20 0V9H10ZM0 10H9V18L0 17ZM10 10H20V20L10 18Z" fill="#fff" />
          </Svg>
        </StartButton>
        <TaskSearch>
          <Svg s={22}>
            <circle cx="13" cy="8" r="7" stroke="#222" strokeWidth="2" />
            <path d="M8 13L1 21" stroke="#222" strokeWidth="2" />
          </Svg>
          <input aria-label="搜索" placeholder="搜索" />
          <Svg w={88} h={45}>
            <path d="M44 1C24 0 14 10 11 19L5 17C7 21 9 23 13 24L0 28C4 30 8 31 13 31L2 41C8 43 14 42 18 40L16 45H28C30 30 34 18 46 10Z" fill="#c82830" />
            <path d="M44 1C30 0 16 8 11 19L5 17C7 21 11 24 16 22C22 12 32 6 44 5Z" fill="#f06830" />
            <path d="M0 28C4 30 8 31 14 30L19 26L12 24ZM2 41L12 32L18 36Z" fill="#e86028" />
            <path d="M10 25L22 40L18 45C12 38 10 32 10 25ZM83 18L74 36L87 32L80 40L88 42L70 45Z" fill="#a8a8a8" />
            <path d="M22 45C22 8 78 8 78 45Z" fill="#b4b4b0" />
            <path d="M26 45C26 16 50 14 50 14V26L30 45Z" fill="#e4e4e0" />
            <path d="M44 8H54V26H44Z" fill="#a8a8a4" />
            <ellipse cx="49" cy="8" rx="8" ry="5" fill="#d0d0cc" />
            <circle cx="49" cy="30" r="6" fill="#888" stroke="#ddd" />
            <circle cx="38" cy="31" r="3" fill="#888" stroke="#ddd" />
            <circle cx="60" cy="31" r="3" fill="#888" stroke="#ddd" />
            <path d="M30 45C30 34 44 36 50 40C56 36 70 34 70 45Z" fill="#f4b888" stroke="#604020" strokeWidth="2" />
          </Svg>
        </TaskSearch>
        <Tasks>
          {taskIcons.map(([name, icon]) => (
            <Task key={name} aria-label={name} $open={name === "Edge" || name === "CST"} $on={name === "CST"}>
              <Svg s={30}>{icon}</Svg>
            </Task>
          ))}
        </Tasks>
        <Tray>
          <Svg s={30}>
            <circle cx="14" cy="15" r="14" fill="#fff" />
            <circle cx="14" cy="15" r="11" fill="#0094dc" />
            <text x="14" y="23" textAnchor="middle" fontSize="21" fontWeight="700" fill="#fff">?</text>
            <circle cx="23" cy="21" r="6" fill="#f0a820" />
            <path d="M23 17V18M23 20V24" stroke="#fff" strokeWidth="2" />
          </Svg>
          <Weather>
            <Svg w={32} h={30}>
              <path d="M7 19C0 19 0 11 6 10C7 2 18 0 22 6C30 6 33 18 25 19Z" fill="#ccd4e8" />
              <path d="M1 23H31M1 28H31" stroke="#a8b4cc" strokeWidth="3" />
              <circle cx="28" cy="4" r="4" fill="#d83020" />
            </Svg>
            12°C <span>雾</span>
          </Weather>
          <Svg s={16}><path d="M1 12L8 4L15 12" stroke="#fff" strokeWidth="2" /></Svg>
          <Svg s={22}>
            <path d="M7 3L20 1V20L1 18V5L7 4" stroke="#fff" />
            <path d="M7 14C5 9 12 6 15 9V5M14 9H10M15 11C16 16 9 17 7 14V18" stroke="#fff" />
            <circle cx="16" cy="17" r="5" fill="#ff9a00" />
          </Svg>
          <Steam><FaSteamSymbol size={18} /></Steam>
          <Svg w={20} h={14}>
            <path d="M1 2H17V12H1ZM19 5V9" stroke="#fff" strokeWidth="2" />
            <path d="M3 4H9V10H3Z" fill="#fff" />
          </Svg>
          <Ime>英</Ime>
          <Svg s={20}>
            <path d="M2 3L18 0L20 17L2 20Z" fill="#f05428" />
            <path d="M15 5C10 3 6 4 7 7C8 10 15 9 15 13C14 16 8 17 5 15" stroke="#fff" strokeWidth="3" />
          </Svg>
          <Clock>
            <span>11:16</span>
            <span>2023/3/24</span>
          </Clock>
          <Svg w={32} h={32}>
            <path d="M1 1H20V19H10L6 23V19H1Z" fill="#fff" />
            <path d="M4 6H17M4 10H17M4 14H17" stroke="#222" strokeWidth="2" />
            <circle cx="21" cy="22" r="9" fill="#444" stroke="#999" />
            <text x="21" y="28" textAnchor="middle" fontSize="16" fontWeight="600" fill="#fff">2</text>
          </Svg>
        </Tray>
      </TaskBar>
    </Window>
  );
};

const GlobalStyle = createGlobalStyle`
  * {
    box-sizing: border-box;
  }
  body {
    margin: 0;
    background: #f0f0f0;
  }
  button, input, select {
    font: inherit;
    color: inherit;
    border: 0;
    padding: 0;
    margin: 0;
    background: none;
    outline: none;
  }
  ul, dl, dd, p {
    margin: 0;
    padding: 0;
    list-style: none;
  }
  svg {
    display: block;
    flex: none;
  }
`;

const DefsSvg = styled.svg`
  margin-bottom: 0;
`;

const Window = styled.div`
  height: 100vh;
  display: flex;
  flex-direction: column;
  overflow: hidden;
  font: 15px/20px ${ui};
  color: #505050;
`;

const IconButton = styled.button`
  display: flex;
  align-items: center;
  justify-content: center;
`;

const Caret = styled.i`
  flex: none;
  border: 4px solid transparent;
  border-top: 5px solid ${(props) => (props.$light ? "#8aa0b0" : "#707070")};
  border-bottom: 0;
  ${(props) =>
    props.$up &&
    css`
      transform: rotate(180deg);
    `}
`;

const TitleBar = styled.header`
  display: grid;
  grid-template-columns: 551px 114px 1fr;
  grid-template-rows: 37px 32px;
  background: #005686;
  border-top: 1px solid #2a7ca8;
  color: #fff;
`;

const Quick = styled.div`
  display: flex;
  align-items: center;
  gap: 7px;
  padding: 0 6px 4px;
  & > svg {
    margin-left: 6px;
  }
`;

const Context = styled.div`
  background: #064a70;
  border-top: 5px solid #f0bc34;
  color: #e4b83c;
  text-align: center;
  line-height: 26px;
`;

const TitleRow = styled.div`
  display: flex;
  align-items: center;
  justify-content: space-between;
  padding: 0 24px 0 192px;
`;

const Title = styled.h1`
  margin: 0;
  font: inherit;
`;

const WindowButtons = styled.div`
  display: flex;
  gap: 46px;
`;

const Menu = styled.nav`
  display: flex;
  align-items: center;
  justify-content: space-between;
  padding: 0 14px 0 24px;
  border-bottom: 1px solid #d8b040;
`;

const MenuTab = styled.button`
  height: 30px;
  &:first-child {
    margin-right: 8px;
  }
`;

const ActiveTab = styled.button`
  background: #f0f0f0;
  border: 1px solid #f0bc34;
  border-bottom: 0;
  color: #8c6c24;
`;

const MenuEnd = styled.div`
  display: flex;
  align-items: center;
  justify-content: flex-end;
  gap: 9px;
  padding-right: 5px;
  border-bottom: 1px solid #d8b040;
`;

const HelpSearch = styled.div`
  display: flex;
  align-items: center;
  width: 199px;
  height: 22px;
  padding: 0 8px 0 3px;
  background: #04466c;
  input {
    flex: 1;
    min-width: 0;
  }
  input::placeholder {
    color: #c8d4dc;
  }
`;

const Upload = styled.button`
  position: absolute;
  top: 40px;
  right: 101px;
  width: 159px;
  height: 40px;
  display: flex;
  align-items: center;
  overflow: hidden;
  border: 2px solid #0c9cff;
  border-radius: 8px;
  background: #eaf6ff;
  color: #0c90f8;
  padding-right: 28px;
  justify-content: space-between;
  span {
    display: flex;
    align-items: center;
    justify-content: center;
    width: 43px;
    height: 40px;
    background: #0c90ff;
  }
`;

const Ribbon = styled.div`
  display: flex;
  height: 120px;
  padding-top: 2px;
  border-bottom: 1px solid #d4d4d4;
`;

const GroupBox = styled.section`
  display: flex;
  flex-direction: column;
  flex: none;
  width: ${(props) => props.$w}px;
  height: 113px;
  border-right: 1px solid #d4d4d4;
`;

const GroupBody = styled.div`
  display: flex;
  justify-content: center;
  height: 97px;
  flex: none;
  padding-top: 3px;
`;

const GroupName = styled.div`
  text-align: center;
  line-height: 24px;
  color: #707070;
`;

const BigButton = styled.button`
  display: flex;
  flex-direction: column;
  align-items: center;
  width: ${(props) => props.$w}px;
  height: 90px;
  background: ${(props) => (props.$on ? "#b8b8b8" : "none")};
  color: #505050;
  svg {
    height: 46px;
  }
  ${Caret} {
    margin-top: 7px;
  }
`;

const Stack = styled.div`
  display: flex;
  flex-direction: column;
  width: 158px;
`;

const Option = styled.label`
  display: flex;
  align-items: center;
  gap: 6px;
  height: 30px;
  padding: 0 6px;
  input {
    appearance: none;
    width: 16px;
    height: 16px;
    background: #fff;
    border: 1px solid #a8a8a8;
  }
  ${Caret} {
    margin-left: 4px;
  }
`;

const SizeRow = styled.div`
  display: flex;
  align-items: center;
  height: 30px;
  gap: 6px;
  white-space: nowrap;
  i {
    font-style: normal;
  }
  input {
    appearance: none;
    width: 90px;
    height: 1px;
    background: #c0c0c0;
  }
  input::-webkit-slider-thumb {
    appearance: none;
    width: 7px;
    height: 14px;
    background: #f0f0f0;
    border: 1px solid #b0b0b0;
  }
`;

const Fields = styled.div`
  display: grid;
  grid-template-columns: 79px 100px;
  grid-auto-rows: 29px;
  row-gap: 1px;
  align-items: center;
  margin-left: 7px;
  padding-right: 4px;
  border-right: 1px solid #d4d4d4;
  height: 89px;
`;

const Field = styled.input`
  width: 100%;
  height: 29px;
  padding: 0 4px;
  background: #fff;
  border: 1px solid #d4d4d4;
  &:disabled {
    color: #888;
  }
`;

const Drop = styled.div`
  display: flex;
  align-items: center;
  height: 29px;
  background: #fff;
  border: 1px solid #d4d4d4;
  select {
    flex: 1;
    appearance: none;
    padding: 0 4px;
    opacity: 1;
  }
  select:disabled {
    color: #888;
  }
  &::after {
    content: "";
    margin-right: 8px;
    border: 3px solid transparent;
    border-top: 5px solid #707070;
    border-bottom: 0;
  }
`;

const Choices = styled.div`
  display: flex;
  flex-direction: column;
  gap: 1px;
  width: 162px;
  margin-left: 4px;
`;

const Workspace = styled.main`
  flex: 1;
  min-height: 0;
  display: flex;
  gap: 5px;
`;

const Nav = styled.aside`
  display: flex;
  flex-direction: column;
  width: 140px;
  padding-top: 1px;
`;

const PanelHead = styled.div`
  display: flex;
  align-items: center;
  justify-content: space-between;
  height: 21px;
  padding: 1px 5px 0 6px;
  background: #fff;
  font: 13px/20px ${mono};
  color: #222;
`;

const TreeSearch = styled.input`
  height: 22px;
  margin: 3px 0 4px;
  padding: 0 3px;
  width: 100%;
  background: #fff;
  border: 1px solid #d8d8d8;
  font: 13px/20px ${mono};
  &::placeholder {
    color: #a8a8a8;
  }
`;

const TreeBox = styled.div`
  flex: 1;
  min-height: 0;
  display: grid;
  grid-template: 1fr 20px / 1fr 21px;
  border: 1px solid #a0a0a0;
`;

const TreeView = styled.div`
  overflow: hidden;
  background: #fff;
  font: 15px/20px ${tree};
  color: #101010;
  ul {
    margin-left: -12px;
    padding-top: 1px;
  }
`;

const TreeRow = styled.li`
  display: flex;
  align-items: center;
  height: 20px;
  white-space: nowrap;
  b {
    flex: none;
    width: 15px;
    height: 12px;
    margin-right: 6px;
    background: ${(props) => (props.$kind === "folder" ? "#e4a828" : "#e8e8e8")};
    border-right: 1px solid ${(props) => (props.$kind === "folder" ? "#b07c10" : "#777")};
    border-bottom: 1px solid ${(props) => (props.$kind === "folder" ? "#e4a828" : "#40a040")};
  }
`;

const TreeName = styled.span`
  padding: 0 2px;
  background: ${(props) => (props.$on ? "#cacaca" : "none")};
`;

const TreeScroll = styled.div`
  display: flex;
  flex-direction: column;
  align-items: center;
  padding: 6px 2px 5px 0;
  div {
    width: 19px;
    flex: 1;
    margin: 55px 0 17px;
    background: #cdcdcd;
  }
`;

const TreeScrollX = styled.div`
  display: flex;
  align-items: center;
  padding: 0 4px;
  div {
    width: 34px;
    height: 19px;
    margin: 0 26px 0 24px;
    background: #cdcdcd;
  }
`;

const Main = styled.div`
  flex: 1;
  min-width: 0;
  display: flex;
  flex-direction: column;
`;

const DocTab = styled.div`
  display: flex;
  align-items: center;
  gap: 5px;
  align-self: flex-start;
  height: 33px;
  margin: 2px 0 0 1px;
  padding: 0 16px 0 13px;
  background: #fff;
  border: 1px solid #d0d0d0;
  border-bottom: 0;
  border-radius: 4px 4px 0 0;
`;

const TabClose = styled.button`
  display: flex;
  align-items: center;
  justify-content: center;
  width: 17px;
  height: 17px;
  border-radius: 2px;
  background: ${(props) => (props.$gray ? "#b4b4b4" : "#e07050")};
  border: 1px solid ${(props) => (props.$gray ? "#a0a0a0" : "#d84c38")};
`;

const ViewFrame = styled.div`
  flex: 1;
  min-height: 0;
  display: flex;
  padding: 2px;
  border: 1px solid #a0a0a0;
  background: #dcdcdc;
`;

const View = styled.div`
  position: relative;
  flex: 1;
  overflow: hidden;
  outline: 1px solid #8c8c8c;
  background: linear-gradient(#a4a8b7, #d0d3dd 50%, #fff);
`;

const Scene = styled.svg`
  width: 100%;
  height: 100%;
`;

const InfoBox = styled.div`
  position: absolute;
  left: 6px;
  bottom: 4px;
  width: 293px;
  height: 193px;
  padding: 4px 6px;
  background: rgba(255, 255, 255, 0.7);
  font-size: 16px;
  color: #585858;
  strong {
    display: block;
    font: 700 14px/22px ${mono};
    color: #707070;
  }
  dl {
    display: grid;
    grid-template-columns: 129px 1fr;
    padding-left: 3px;
  }
`;

const LegendBox = styled.div`
  position: absolute;
  top: 6px;
  right: 7px;
  background: rgba(255, 255, 255, 0.7);
`;

const LegendText = styled.text`
  font: ${(props) => (props.$bold ? 700 : 400)} 13px ${mono};
  fill: #606060;
  text-anchor: ${(props) => (props.$end ? "end" : "start")};
`;

const TriadBox = styled.svg`
  position: absolute;
  right: 71px;
  bottom: 8px;
`;

const ViewTabs = styled.div`
  display: flex;
  height: 21px;
  margin-bottom: 5px;
  background: #fff;
`;

const Tab = styled.button`
  display: flex;
  align-items: center;
  justify-content: center;
  gap: 5px;
  width: ${(props) => props.$w}px;
  padding-top: 1px;
  font: 13px/18px ${mono};
  color: ${(props) => (props.$dark ? "#333" : "#585858")};
  ${(props) =>
    props.$on
      ? css`
          background: #fff;
          border-right: 1px solid #b0b0b0;
          border-bottom: 2px solid #005686;
        `
      : css`
          background: linear-gradient(#999, #999) right center / 1px 14px no-repeat;
        `}
`;

const Lower = styled.div`
  display: flex;
  gap: 5px;
  height: 320px;
`;

const Panel = styled.section`
  display: flex;
  flex-direction: column;
  min-width: 0;
  ${(props) => (props.$messages ? "width: 637px;" : "flex: 1;")}
`;

const TableBox = styled.div`
  flex: 1;
  min-height: 0;
  background: #fff;
  border: 1px solid #a0a0a8;
`;

const Table = styled.table`
  width: 100%;
  table-layout: fixed;
  border-collapse: collapse;
  th {
    height: 29px;
    padding: 0 6px;
    font-weight: 400;
    text-align: left;
    border-right: 1px solid #e0e0e0;
    width: 275px;
  }
  th:first-child {
    width: 29px;
  }
  th:last-child {
    width: auto;
    border: 0;
  }
  td {
    height: 25px;
    padding: 0 6px 6px 5px;
    border-bottom: 1px solid #e4e4e4;
    line-height: 18px;
  }
  td:first-child:not([colspan]) {
    padding: 0 6px;
    background: #e2e2e2;
  }
  td:nth-child(4) {
    color: #b0b0b0;
  }
  em {
    float: right;
    font-style: normal;
    color: #b0b0b0;
    margin-right: -5px;
  }
`;

const NewParam = styled.td`
  &&& {
    padding: 0 0 0 104px;
    color: #b8b8b8;
  }
`;

const PanelTabs = styled.div`
  display: flex;
  height: 25px;
`;

const MessageTools = styled.div`
  display: flex;
  gap: 7px;
  height: 25px;
`;

const ToolButton = styled.button`
  display: flex;
  align-items: center;
  justify-content: center;
  width: 28px;
  background: ${(props) => (props.$on ? "#dcdcdc" : props.$plain ? "none" : "#fff")};
  margin-left: ${(props) => (props.$plain ? 8 : 0)}px;
`;

const MessageBox = styled.div`
  flex: 1;
  min-height: 0;
  display: flex;
  overflow: hidden;
  background: #fff;
  border: 1px solid #b0b0b0;
  font: 13px/17px ${mono};
  ul {
    flex: 1;
    padding-left: 4px;
  }
`;

const Message = styled.li`
  display: flex;
  margin-right: 7px;
  span {
    width: 19px;
    padding-top: 4px;
  }
  p {
    flex: 1;
    padding: 5px 0 5px 5px;
    white-space: pre;
    border-bottom: 1px solid #d8d8d8;
  }
`;

const MessageScroll = styled.div`
  display: flex;
  flex-direction: column;
  width: 21px;
  background: #e4e4e4;
  button,
  div {
    display: flex;
    align-items: center;
    justify-content: center;
    height: 22px;
    background: #f0f0f0;
    border: 1px solid #b8b8b8;
  }
  div {
    height: 68px;
    margin-bottom: auto;
  }
`;

const StatusBar = styled.footer`
  display: flex;
  align-items: center;
  height: 33px;
  padding: 0 2px 0 8px;
`;

const StatusTools = styled.div`
  display: flex;
  align-items: center;
  margin: 0 2px 0 auto;
  hr {
    width: 1px;
    height: 20px;
    margin: 0 4px;
    border: 0;
    background: #ccc;
  }
`;

const StatusButton = styled.button`
  display: flex;
  align-items: center;
  justify-content: center;
  width: ${(props) => (props.$wide ? 44 : 27)}px;
  height: 27px;
  background: ${(props) => (props.$on ? "#c8c8c8" : "none")};
`;

const Readout = styled.div`
  display: flex;
  gap: 10px;
  padding: 0 11px;
  border-right: 1px solid #606060;
  color: ${(props) => (props.$dim ? "#8c8c8c" : "#505050")};
`;

const TaskBar = styled.div`
  display: flex;
  height: 50px;
  background: #202224;
  color: #fff;
`;

const StartButton = styled.button`
  display: flex;
  align-items: center;
  justify-content: center;
  width: 60px;
`;

const TaskSearch = styled.div`
  display: flex;
  align-items: center;
  width: 360px;
  padding: 0 10px 0 14px;
  background: #f0f0f0;
  border: 1px solid #b8b8b8;
  color: #222;
  font-size: 19px;
  input {
    flex: 1;
    min-width: 0;
    padding-left: 13px;
  }
  input::placeholder {
    color: #222;
  }
  svg:last-child {
    align-self: flex-end;
  }
`;

const Tasks = styled.div`
  display: flex;
  padding-left: 3px;
`;

const Task = styled.button`
  display: flex;
  align-items: center;
  justify-content: center;
  width: 62px;
  background: ${(props) => (props.$on ? "#4e5052" : "none")};
  box-shadow: ${(props) => (props.$open ? "inset 0 -3px #76b9ed" : "none")};
`;

const Tray = styled.div`
  display: flex;
  align-items: center;
  margin-left: auto;
  padding-right: 20px;
  gap: 10px;
  font-size: 18px;
`;

const Weather = styled.div`
  display: flex;
  align-items: center;
  gap: 10px;
  margin: 0 20px 0 121px;
`;

const Steam = styled.span`
  display: flex;
  padding: 1px;
  border-radius: 50%;
  background: #1c4c88;
`;

const Ime = styled.span`
  margin-right: 7px;
`;

const Clock = styled.div`
  display: flex;
  flex-direction: column;
  align-items: center;
  margin: 0 12px;
  font-size: 16px;
  line-height: 23px;
`;

export default App;
